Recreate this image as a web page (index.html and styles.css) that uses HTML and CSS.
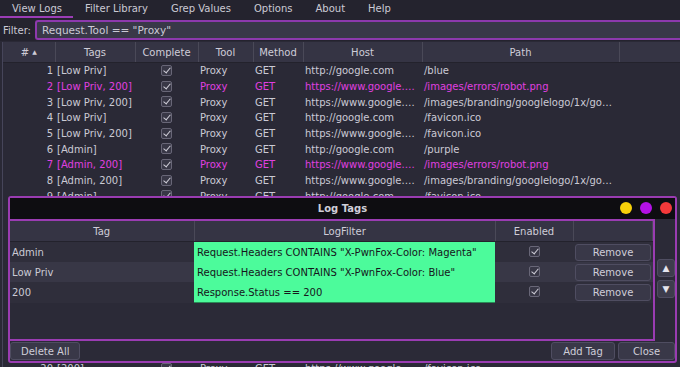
FILE: index.html
```html
<!DOCTYPE html>
<html lang="en">
<head>
    <meta charset="UTF-8">
    <title>Log Viewer</title>
    <link rel="stylesheet" href="styles.css">
</head>
<body>
    <div class="menubar">
        <div class="tab active">View Logs</div>
        <div class="tab">Filter Library</div>
        <div class="tab">Grep Values</div>
        <div class="tab">Options</div>
        <div class="tab">About</div>
        <div class="tab">Help</div>
    </div>
    <div class="filter-row">
        <span class="filter-label">Filter:</span>
        <div class="filter-input">Request.Tool == "Proxy"</div>
    </div>
    <div class="log-wrap">
        <table class="log-table">
            <colgroup>
                <col style="width:52px"><col style="width:80px"><col style="width:63px"><col style="width:55px"><col style="width:50px"><col style="width:119px"><col style="width:197px"><col>
            </colgroup>
            <thead>
                <tr>
                    <th># <span class="sort">&#9650;</span></th><th>Tags</th><th>Complete</th><th>Tool</th><th>Method</th><th>Host</th><th>Path</th><th></th>
                </tr>
            </thead>
            <tbody id="logRows"></tbody>
        </table>
    </div>

    <div class="dialog">
        <div class="dialog-title">
            <span>Log Tags</span>
            <div class="dots">
                <span class="dot yellow"></span>
                <span class="dot purple"></span>
                <span class="dot red"></span>
            </div>
        </div>
        <div class="dialog-body">
            <div class="tag-panel">
                <table class="tag-table">
                    <colgroup>
                        <col style="width:184px"><col style="width:301px"><col style="width:78px"><col>
                    </colgroup>
                    <thead>
                        <tr><th>Tag</th><th>LogFilter</th><th>Enabled</th><th></th></tr>
                    </thead>
                    <tbody>
                        <tr>
                            <td>Admin</td>
                            <td class="filter-cell">Request.Headers CONTAINS "X-PwnFox-Color: Magenta"</td>
                            <td class="center"><span class="check"></span></td>
                            <td><button class="btn remove">Remove</button></td>
                        </tr>
                        <tr class="alt">
                            <td>Low Priv</td>
                            <td class="filter-cell">Request.Headers CONTAINS "X-PwnFox-Color: Blue"</td>
                            <td class="center"><span class="check"></span></td>
                            <td><button class="btn remove">Remove</button></td>
                        </tr>
                        <tr>
                            <td>200</td>
                            <td class="filter-cell">Response.Status == 200</td>
                            <td class="center"><span class="check"></span></td>
                            <td><button class="btn remove">Remove</button></td>
                        </tr>
                    </tbody>
                </table>
            </div>
            <div class="side-buttons">
                <button class="btn arrow">&#9650;</button>
                <button class="btn arrow">&#9660;</button>
            </div>
        </div>
        <div class="dialog-footer">
            <button class="btn">Delete All</button>
            <div class="spacer"></div>
            <button class="btn add-tag">Add Tag</button>
            <button class="btn close">Close</button>
        </div>
    </div>

    <script>
        const rows = [
            [1, "[Low Priv]", "http://google.com", "/blue", false],
            [2, "[Low Priv, 200]", "https://www.google.com", "/images/errors/robot.png", true],
            [3, "[Low Priv, 200]", "https://www.google.com", "/images/branding/googlelogo/1x/googlelogo_color.png", false],
            [4, "[Low Priv]", "http://google.com", "/favicon.ico", false],
            [5, "[Low Priv, 200]", "https://www.google.com", "/favicon.ico", false],
            [6, "[Admin]", "http://google.com", "/purple", false],
            [7, "[Admin, 200]", "https://www.google.com", "/images/errors/robot.png", true],
            [8, "[Admin, 200]", "https://www.google.com", "/images/branding/googlelogo/1x/googlelogo_color.png", false],
            [9, "[Admin]", "http://google.com", "/favicon.ico", false]
        ];
        for (let i = 10; i <= 20; i++) {
            rows.push([i, "[200]", "https://www.google.com", "/favicon.ico", false]);
        }
        const body = document.getElementById("logRows");
        body.innerHTML = rows.map(r => `
            <tr class="${r[4] ? 'magenta' : ''}">
                <td class="num">${r[0]}</td>
                <td>${r[1]}</td>
                <td class="center"><span class="check"></span></td>
                <td>Proxy</td>
                <td>GET</td>
                <td>${r[2]}</td>
                <td>${r[3]}</td>
                <td></td>
            </tr>`).join("");
    </script>
</body>
</html>
```

FILE: styles.css
```css
body {
    margin: 0;
    width: 680px;
    height: 367px;
    overflow: hidden;
    position: relative;
    background-color: #2a2936;
    color: #cbcad5;
    font-family: 'DejaVu Sans', Verdana, sans-serif;
    font-size: 10px;
}
.menubar {
    display: flex;
    height: 18px;
    background-color: #24232e;
}
.tab {
    padding: 3px 11px 0 12px;
    height: 15px;
    box-sizing: border-box;
}
.tab.active {
    border-bottom: 2px solid #9b3db6;
    height: 18px;
}
.filter-row {
    display: flex;
    align-items: center;
    height: 22px;
    background-color: #24232e;
    padding-top: 1px;
}
.filter-label {
    padding: 0 4px 0 3px;
}
.filter-input {
    flex-grow: 1;
    height: 20px;
    box-sizing: border-box;
    border: 2px solid #8d39ad;
    border-right: none;
    border-radius: 3px 0 0 3px;
    background-color: #393848;
    padding: 2px 5px;
    font-size: 10.5px;
}
.log-wrap {
    margin-top: 1px;
    margin-left: 2px;
    height: 326px;
    overflow: hidden;
    border-left: 1px solid #46455a;
}
.log-table {
    border-collapse: collapse;
    table-layout: fixed;
    width: 678px;
}
.log-table th {
    height: 20px;
    padding: 0;
    background-color: #353444;
    font-weight: normal;
    border-right: 1px solid #4a4958;
    border-bottom: 1px solid #23222c;
    color: #cfcdd8;
}
.sort {
    font-size: 6px;
    vertical-align: 2px;
}
.log-table td {
    height: 15.7px;
    padding: 0 2px;
    white-space: nowrap;
    overflow: hidden;
    text-overflow: ellipsis;
}
.log-table td.num {
    text-align: right;
}
.log-table .magenta td {
    color: #e040e0;
}
.center {
    text-align: center;
}
.check {
    display: inline-block;
    width: 9px;
    height: 9px;
    border: 1px solid #686677;
    border-radius: 2px;
    background-color: #383746;
    position: relative;
    vertical-align: -1px;
}
.check::after {
    content: "";
    position: absolute;
    left: 3px;
    top: 0;
    width: 3px;
    height: 6px;
    border-right: 1.5px solid #d0cfd9;
    border-bottom: 1.5px solid #d0cfd9;
    transform: rotate(40deg);
}

/* tag dialog */
.dialog {
    position: absolute;
    left: 8px;
    top: 196px;
    width: 669px;
    height: 167px;
    box-sizing: border-box;
    border: 2px solid #9a3cb2;
    border-radius: 3px;
    background-color: #2b2a37;
    display: flex;
    flex-direction: column;
}
.dialog-title {
    height: 21px;
    background-color: #0e0d11;
    display: flex;
    align-items: center;
    justify-content: center;
    position: relative;
    font-weight: bold;
    color: #d0cfd9;
}
.dots {
    position: absolute;
    right: 3px;
    top: 4px;
    display: flex;
    gap: 8px;
}
.dot {
    width: 12px;
    height: 12px;
    border-radius: 50%;
}
.yellow { background-color: #f7d10a; }
.purple { background-color: #b411e6; }
.red { background-color: #f4393a; }
.dialog-body {
    display: flex;
    height: 122px;
}
.tag-panel {
    width: 645px;
    box-sizing: border-box;
    border: 2px solid #9a3cb2;
    border-left: none;
}
.tag-table {
    border-collapse: collapse;
    table-layout: fixed;
    width: 643px;
}
.tag-table th {
    height: 20px;
    padding: 0;
    background-color: #353444;
    font-weight: normal;
    border-right: 1px solid #4a4958;
    border-bottom: 1px solid #23222c;
    color: #cfcdd8;
}
.tag-table td {
    height: 20px;
    padding: 0 2px;
    background-color: #2f2e3b;
    white-space: nowrap;
    overflow: hidden;
}
.tag-table tr.alt td {
    background-color: #383746;
}
.tag-table tr td.filter-cell {
    background-color: #4cfb9b;
    color: #16161b;
    padding-left: 3px;
}
.tag-table tr:last-child td.filter-cell {
    border-bottom: 1px solid #2a8a56;
}
.btn {
    font-family: 'DejaVu Sans', Verdana, sans-serif;
    font-size: 10px;
    color: #cfcdd8;
    background-color: #393848;
    border: 1px solid #4f4d61;
    border-radius: 3px;
    padding: 0 10px;
    height: 18px;
}
.btn.remove {
    width: 76px;
    height: 17px;
    display: block;
}
.side-buttons {
    display: flex;
    flex-direction: column;
    gap: 3px;
    padding: 40px 0 0 2px;
}
.btn.arrow {
    width: 18px;
    height: 18px;
    padding: 0;
    font-size: 9px;
    background-color: #3d3c4c;
    color: #e6e5ee;
}
.dialog-footer {
    display: flex;
    align-items: center;
    gap: 3px;
    height: 20px;
}
.spacer {
    flex-grow: 1;
}
.btn.add-tag {
    width: 64px;
}
.btn.close {
    width: 57px;
}
```
